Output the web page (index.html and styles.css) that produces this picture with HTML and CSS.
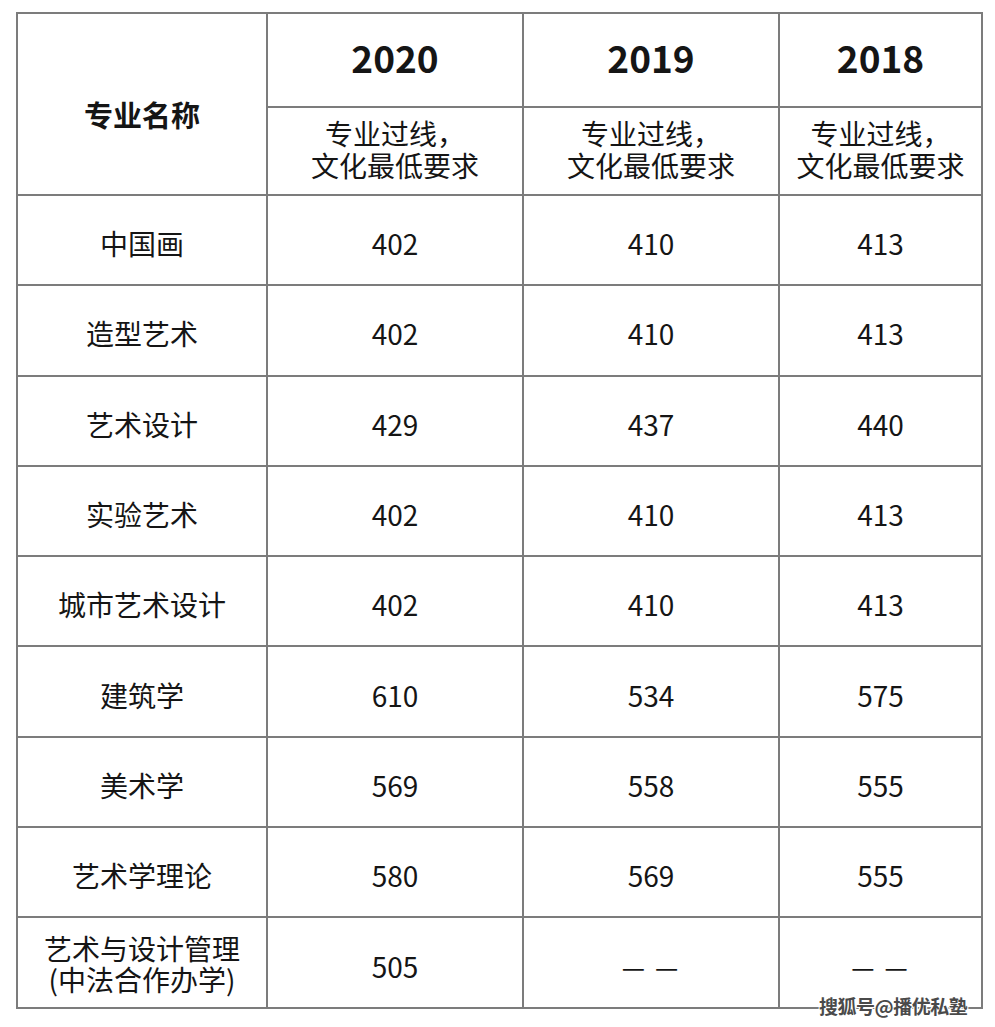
FILE: index.html
```html
<!DOCTYPE html>
<html lang="zh">
<head>
<meta charset="utf-8">
<link rel="stylesheet" href="styles.css">
</head>
<body>
<div class="page">
<table class="scores">
  <colgroup>
    <col class="c-name">
    <col class="c-year">
    <col class="c-year">
    <col class="c-last">
  </colgroup>
  <thead>
    <tr class="r-year">
      <th rowspan="2" class="h-name">专业名称</th>
      <th class="h-year">2020</th>
      <th class="h-year">2019</th>
      <th class="h-year">2018</th>
    </tr>
    <tr class="r-sub">
      <th class="h-sub">专业过线，<br>文化最低要求</th>
      <th class="h-sub">专业过线，<br>文化最低要求</th>
      <th class="h-sub">专业过线，<br>文化最低要求</th>
    </tr>
  </thead>
  <tbody>
    <tr><td>中国画</td><td>402</td><td>410</td><td>413</td></tr>
    <tr><td>造型艺术</td><td>402</td><td>410</td><td>413</td></tr>
    <tr><td>艺术设计</td><td>429</td><td>437</td><td>440</td></tr>
    <tr><td>实验艺术</td><td>402</td><td>410</td><td>413</td></tr>
    <tr><td>城市艺术设计</td><td>402</td><td>410</td><td>413</td></tr>
    <tr><td>建筑学</td><td>610</td><td>534</td><td>575</td></tr>
    <tr><td>美术学</td><td>569</td><td>558</td><td>555</td></tr>
    <tr><td>艺术学理论</td><td>580</td><td>569</td><td>555</td></tr>
    <tr><td class="two">艺术与设计管理<br>(中法合作办学)</td><td>505</td><td class="dash">— —</td><td class="dash">— —</td></tr>
  </tbody>
</table>
<div class="mark">搜狐号@播优私塾</div>
</div>
</body>
</html>
```
FILE: styles.css
```css
html, body {
  margin: 0;
  padding: 0;
  background: #ffffff;
}
body {
  font-family: "Noto Sans CJK SC", "Noto Sans", sans-serif;
  color: #151515;
}
.page {
  position: relative;
  width: 995px;
  height: 1027px;
  padding-top: 12px;
  padding-left: 16px;
  box-sizing: border-box;
}
.scores {
  border-collapse: collapse;
  table-layout: fixed;
  width: 965px;
}
.c-name { width: 250px; }
.c-year { width: 256px; }
.c-last { width: 203px; }
.scores th, .scores td {
  border: 2px solid #7c7c7c;
  text-align: center;
  vertical-align: middle;
  padding: 0;
}
.scores th.h-name {
  font-size: 29px;
  font-weight: 700;
  padding-top: 20px;
}
.r-year { height: 94px; }
.scores th.h-year {
  font-size: 37px;
  font-weight: 700;
  line-height: 1;
  padding-bottom: 6px;
}
.r-sub { height: 88px; }
.scores th.h-sub {
  font-size: 28px;
  font-weight: 400;
  line-height: 32px;
  padding-bottom: 5px;
}
.scores tbody tr { height: 90.3px; }
.scores td {
  font-size: 28px;
  line-height: 1;
  padding-top: 6px;
}
.scores td.two {
  line-height: 31px;
  padding-top: 3px;
}
.scores td.dash {
  font-size: 26px;
  letter-spacing: 2px;
}
.mark {
  position: absolute;
  left: 819px;
  top: 992px;
  font-size: 19px;
  font-weight: 700;
  color: #4a4a4a;
  letter-spacing: -0.5px;
  text-shadow: -1px -1px 0 #fff, 1px -1px 0 #fff, -1px 1px 0 #fff, 1px 1px 0 #fff;
}
```
